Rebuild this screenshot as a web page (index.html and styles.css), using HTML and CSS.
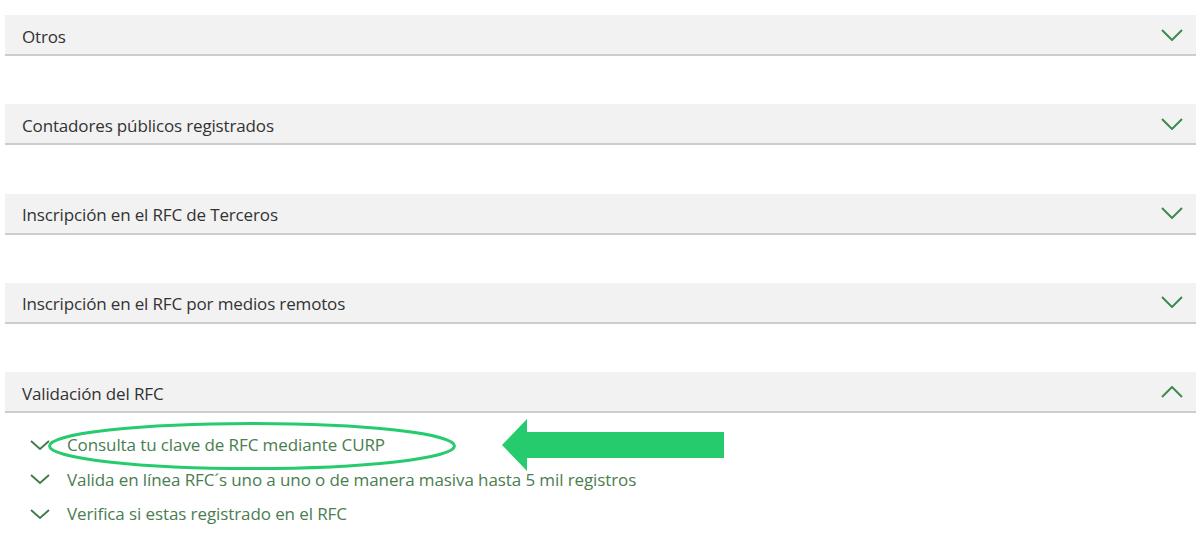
FILE: index.html
```html
<!DOCTYPE html>
<html lang="es">
<head>
<meta charset="utf-8">
<title>RFC</title>
<link rel="stylesheet" href="styles.css">
</head>
<body>
<div class="page">
  <div class="panel">
    <span class="title">Otros</span>
    <svg class="chev" viewBox="0 0 22 12"><path d="M1 1 L11 11 L21 1"/></svg>
  </div>
  <div class="panel">
    <span class="title">Contadores públicos registrados</span>
    <svg class="chev" viewBox="0 0 22 12"><path d="M1 1 L11 11 L21 1"/></svg>
  </div>
  <div class="panel">
    <span class="title">Inscripción en el RFC de Terceros</span>
    <svg class="chev" viewBox="0 0 22 12"><path d="M1 1 L11 11 L21 1"/></svg>
  </div>
  <div class="panel">
    <span class="title">Inscripción en el RFC por medios remotos</span>
    <svg class="chev" viewBox="0 0 22 12"><path d="M1 1 L11 11 L21 1"/></svg>
  </div>
  <div class="panel">
    <span class="title">Validación del RFC</span>
    <svg class="chev" viewBox="0 0 22 12"><path d="M1 11 L11 1 L21 11"/></svg>
  </div>
  <div class="sublist">
    <div class="item"><svg class="ichev" viewBox="0 0 20 10"><path d="M1 1 L10 9 L19 1"/></svg><span>Consulta tu clave de RFC mediante CURP</span></div>
    <div class="item"><svg class="ichev" viewBox="0 0 20 10"><path d="M1 1 L10 9 L19 1"/></svg><span>Valida en línea RFC´s uno a uno o de manera masiva hasta 5 mil registros</span></div>
    <div class="item"><svg class="ichev" viewBox="0 0 20 10"><path d="M1 1 L10 9 L19 1"/></svg><span>Verifica si estas registrado en el RFC</span></div>
    <svg class="ellipse" viewBox="0 0 408 48"><ellipse cx="204" cy="24" rx="202.5" ry="22.5"/></svg>
    <svg class="arrow" viewBox="0 0 222 52"><polygon points="0,26 25,0 25,13 222,13 222,39 25,39 25,52"/></svg>
  </div>
</div>
</body>
</html>
```
FILE: styles.css
```css
html, body {
  margin: 0;
  padding: 0;
  background: #fff;
}
.page {
  padding: 15px 7px 0 5px;
  font-family: "Open Sans", "Noto Sans", sans-serif;
}
.panel {
  height: 39px;
  background: #f2f2f2;
  border-bottom: 2px solid #cdcdcd;
  display: flex;
  align-items: center;
  justify-content: space-between;
  padding: 0 13px 0 17px;
  margin-bottom: 48.3px;
}
.panel:nth-child(5) {
  margin-bottom: 0;
}
.title {
  font-size: 17px;
  color: #333;
  letter-spacing: -0.15px;
  padding-top: 3px;
}
.chev {
  width: 22px;
  height: 12px;
  fill: none;
  stroke: #3f8a4c;
  stroke-width: 2;
}
.sublist {
  position: relative;
  padding: 14.5px 0 0 25px;
  display: flex;
  flex-direction: column;
}
.item {
  display: flex;
  align-items: center;
  height: 34.5px;
  color: #4a7d4f;
  font-size: 17px;
  letter-spacing: -0.1px;
}
.ichev {
  width: 20px;
  height: 10px;
  fill: none;
  stroke: #3d7a48;
  stroke-width: 1.8;
  margin-right: 17px;
}
.ellipse {
  position: absolute;
  left: 43px;
  top: 9px;
  width: 408px;
  height: 48px;
  fill: none;
  stroke: #26cb6d;
  stroke-width: 3;
}
.arrow {
  position: absolute;
  left: 497px;
  top: 6px;
  width: 222px;
  height: 52px;
  fill: #26cb6d;
}
```
